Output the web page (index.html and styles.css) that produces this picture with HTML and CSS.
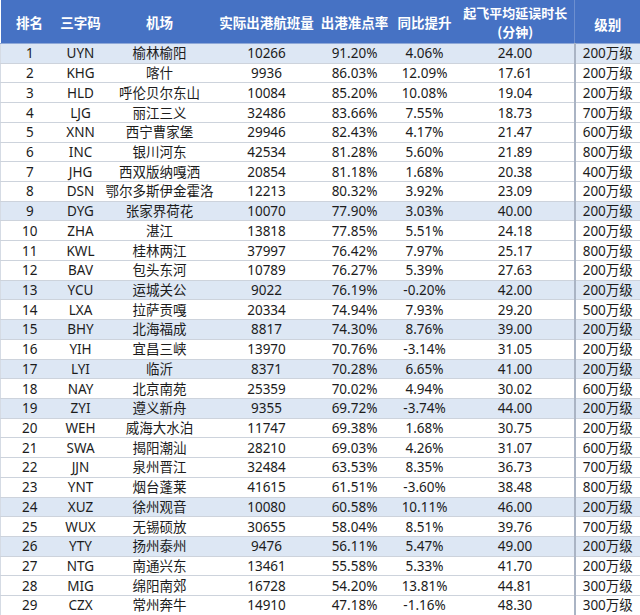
FILE: index.html
```html
<!DOCTYPE html>
<html lang="zh">
<head>
<meta charset="utf-8">
<link rel="stylesheet" href="styles.css">
</head>
<body>
<table class="rank">
  <colgroup>
    <col class="c1"><col class="c2"><col class="c3"><col class="c4"><col class="c5"><col class="c6"><col class="c7"><col class="c8">
  </colgroup>
  <thead>
    <tr>
      <th>排名</th><th>三字码</th><th>机场</th><th>实际出港航班量</th><th>出港准点率</th><th>同比提升</th><th class="two">起飞平均延误时长<br>(分钟)</th><th class="lvl">级别</th>
    </tr>
  </thead>
  <tbody>
    <tr class="hl"><td>1</td><td>UYN</td><td>榆林榆阳</td><td>10266</td><td>91.20%</td><td>4.06%</td><td>24.00</td><td class="lvl">200万级</td></tr>
    <tr><td>2</td><td>KHG</td><td>喀什</td><td>9936</td><td>86.03%</td><td>12.09%</td><td>17.61</td><td class="lvl">200万级</td></tr>
    <tr><td>3</td><td>HLD</td><td>呼伦贝尔东山</td><td>10084</td><td>85.20%</td><td>10.08%</td><td>19.04</td><td class="lvl">200万级</td></tr>
    <tr><td>4</td><td>LJG</td><td>丽江三义</td><td>32486</td><td>83.66%</td><td>7.55%</td><td>18.73</td><td class="lvl">700万级</td></tr>
    <tr><td>5</td><td>XNN</td><td>西宁曹家堡</td><td>29946</td><td>82.43%</td><td>4.17%</td><td>21.47</td><td class="lvl">600万级</td></tr>
    <tr><td>6</td><td>INC</td><td>银川河东</td><td>42534</td><td>81.28%</td><td>5.60%</td><td>21.89</td><td class="lvl">800万级</td></tr>
    <tr><td>7</td><td>JHG</td><td>西双版纳嘎洒</td><td>20854</td><td>81.18%</td><td>1.68%</td><td>20.38</td><td class="lvl">400万级</td></tr>
    <tr><td>8</td><td>DSN</td><td>鄂尔多斯伊金霍洛</td><td>12213</td><td>80.32%</td><td>3.92%</td><td>23.09</td><td class="lvl">200万级</td></tr>
    <tr class="hl"><td>9</td><td>DYG</td><td>张家界荷花</td><td>10070</td><td>77.90%</td><td>3.03%</td><td>40.00</td><td class="lvl">200万级</td></tr>
    <tr><td>10</td><td>ZHA</td><td>湛江</td><td>13818</td><td>77.85%</td><td>5.51%</td><td>24.18</td><td class="lvl">200万级</td></tr>
    <tr><td>11</td><td>KWL</td><td>桂林两江</td><td>37997</td><td>76.42%</td><td>7.97%</td><td>25.17</td><td class="lvl">800万级</td></tr>
    <tr><td>12</td><td>BAV</td><td>包头东河</td><td>10789</td><td>76.27%</td><td>5.39%</td><td>27.63</td><td class="lvl">200万级</td></tr>
    <tr class="hl"><td>13</td><td>YCU</td><td>运城关公</td><td>9022</td><td>76.19%</td><td>-0.20%</td><td>42.00</td><td class="lvl">200万级</td></tr>
    <tr><td>14</td><td>LXA</td><td>拉萨贡嘎</td><td>20334</td><td>74.94%</td><td>7.93%</td><td>29.20</td><td class="lvl">500万级</td></tr>
    <tr class="hl"><td>15</td><td>BHY</td><td>北海福成</td><td>8817</td><td>74.30%</td><td>8.76%</td><td>39.00</td><td class="lvl">200万级</td></tr>
    <tr><td>16</td><td>YIH</td><td>宜昌三峡</td><td>13970</td><td>70.76%</td><td>-3.14%</td><td>31.05</td><td class="lvl">200万级</td></tr>
    <tr class="hl"><td>17</td><td>LYI</td><td>临沂</td><td>8371</td><td>70.28%</td><td>6.65%</td><td>41.00</td><td class="lvl">200万级</td></tr>
    <tr><td>18</td><td>NAY</td><td>北京南苑</td><td>25359</td><td>70.02%</td><td>4.94%</td><td>30.02</td><td class="lvl">600万级</td></tr>
    <tr class="hl"><td>19</td><td>ZYI</td><td>遵义新舟</td><td>9355</td><td>69.72%</td><td>-3.74%</td><td>44.00</td><td class="lvl">200万级</td></tr>
    <tr><td>20</td><td>WEH</td><td>威海大水泊</td><td>11747</td><td>69.38%</td><td>1.68%</td><td>30.75</td><td class="lvl">200万级</td></tr>
    <tr><td>21</td><td>SWA</td><td>揭阳潮汕</td><td>28210</td><td>69.03%</td><td>4.26%</td><td>31.07</td><td class="lvl">600万级</td></tr>
    <tr><td>22</td><td>JJN</td><td>泉州晋江</td><td>32484</td><td>63.53%</td><td>8.35%</td><td>36.73</td><td class="lvl">700万级</td></tr>
    <tr><td>23</td><td>YNT</td><td>烟台蓬莱</td><td>41615</td><td>61.51%</td><td>-3.60%</td><td>38.48</td><td class="lvl">800万级</td></tr>
    <tr class="hl"><td>24</td><td>XUZ</td><td>徐州观音</td><td>10080</td><td>60.58%</td><td>10.11%</td><td>46.00</td><td class="lvl">200万级</td></tr>
    <tr><td>25</td><td>WUX</td><td>无锡硕放</td><td>30655</td><td>58.04%</td><td>8.51%</td><td>39.76</td><td class="lvl">700万级</td></tr>
    <tr class="hl"><td>26</td><td>YTY</td><td>扬州泰州</td><td>9476</td><td>56.11%</td><td>5.47%</td><td>49.00</td><td class="lvl">200万级</td></tr>
    <tr><td>27</td><td>NTG</td><td>南通兴东</td><td>13461</td><td>55.58%</td><td>5.33%</td><td>41.70</td><td class="lvl">200万级</td></tr>
    <tr><td>28</td><td>MIG</td><td>绵阳南郊</td><td>16728</td><td>54.20%</td><td>13.81%</td><td>44.81</td><td class="lvl">300万级</td></tr>
    <tr><td>29</td><td>CZX</td><td>常州奔牛</td><td>14910</td><td>47.18%</td><td>-1.16%</td><td>48.30</td><td class="lvl">300万级</td></tr>
  </tbody>
</table>
</body>
</html>
```

FILE: styles.css
```css
html, body {
  margin: 0;
  padding: 0;
  background: #ffffff;
}

.rank {
  width: 640px;
  table-layout: fixed;
  border-collapse: collapse;
  font-family: "Noto Sans", "Noto Sans CJK SC", sans-serif;
  font-size: 13.5px;
  color: #1c1c1c;
}

.c1 { width: 58px; }
.c2 { width: 44px; }
.c3 { width: 114px; }
.c4 { width: 100px; }
.c5 { width: 76px; }
.c6 { width: 64px; }
.c7 { width: 118px; }
.c8 { width: 66px; }

.rank th {
  height: 39px;
  padding: 0;
  background: #4672c4;
  color: #ffffff;
  font-weight: bold;
  font-family: "Noto Sans CJK SC", sans-serif;
  font-size: 13.5px;
  line-height: 18px;
  text-align: center;
  vertical-align: middle;
  border-bottom: 1px solid #8fa9d8;
  white-space: nowrap;
}

.rank th.two {
  font-size: 13px;
  line-height: 19px;
}

.rank th.lvl {
  border-left: 1px solid #6d8fd0;
  padding-top: 4px;
}

.rank td {
  height: 18.72px;
  padding: 0;
  line-height: 18px;
  text-align: center;
  vertical-align: middle;
  border-bottom: 1px solid #cdd3dc;
  white-space: nowrap;
}

.rank td:first-child {
  border-left: 1px solid #d5dbe4;
}

.rank td.lvl {
  border-left: 2px solid #aab4c4;
  border-right: 1px solid #d5dbe4;
}

.rank tr.hl td {
  background: #dde7f4;
}
```
